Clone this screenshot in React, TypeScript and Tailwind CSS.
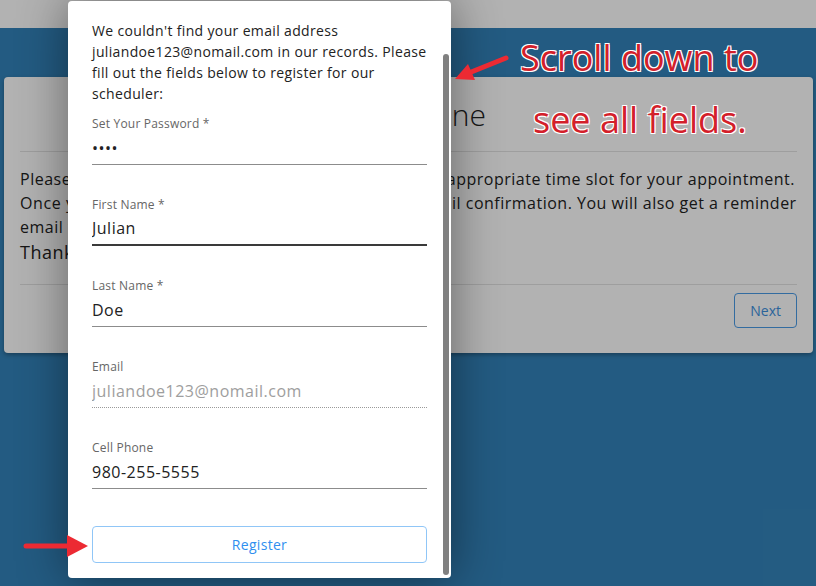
import React from "react"

const font = { fontFamily: '"Open Sans", "Noto Sans", sans-serif' }

function Field({
  label,
  value,
  type = "text",
  focused = false,
  disabled = false,
  last = false,
}: {
  label: string
  value: string
  type?: string
  focused?: boolean
  disabled?: boolean
  last?: boolean
}) {
  return (
    <div className={last ? "mb-[37px]" : "mb-[31px]"}>
      <label className="block h-[18px] text-[12px] leading-[18px] tracking-[0.2px] text-[#666]">{label}</label>
      <input
        type={type}
        value={value}
        readOnly
        disabled={disabled}
        className={
          "block h-[32px] w-full bg-transparent pb-[2px] text-[16px] tracking-[0.5px] outline-none " +
          (focused
            ? "border-b-2 border-[#3a3a3a] text-[#222]"
            : disabled
              ? "border-b border-dotted border-[#9a9a9a] text-[#9e9e9e]"
              : "border-b border-[#8c8c8c] text-[#222]")
        }
      />
    </div>
  )
}

export default function App() {
  return (
    <div className="relative h-[586px] w-full overflow-hidden bg-[#3383ba]" style={font}>
      {/* page behind */}
      <div className="h-[28px] bg-white" />
      <div className="ml-1 mr-[3px] mt-[49px] rounded bg-white shadow-[0_2px_4px_rgba(0,0,0,0.3)]">
        <div className="pr-[327px] pt-[21px] pb-[19px] text-right text-[30px] font-light leading-[34px] text-[#222]">
          Schedule Online
        </div>
        <div className="mx-4 border-t border-[#e2e2e2]" />
        <div className="px-4 pt-[15px] pb-[18px] text-[16px] leading-[24px] tracking-[0.5px] text-[#222]">
          <p className="whitespace-nowrap">
            Please select a date on the calendar, then choose the appropriate time slot for your appointment.
            <br />
            <span className="tracking-[0.6px]">Once you book your time slot, you will receive an</span> email
            confirmation. You will also get a reminder
            <br />
            email the day before your appointment.
          </p>
          <p className="text-[18px] leading-[27px]">Thank you!</p>
        </div>
        <div className="mx-4 border-t border-[#e2e2e2]" />
        <div className="flex justify-end pl-4 pr-4 pt-[8px] pb-[25px]">
          <button className="h-[35px] rounded border border-[#4a9be6] px-[15px] text-[14px] font-medium text-[#3d8fdd]">
            Next
          </button>
        </div>
      </div>

      {/* backdrop */}
      <div className="absolute inset-0 bg-black/30" />

      {/* dialog */}
      <div className="absolute left-[68px] top-[1px] h-[577px] w-[383px] overflow-hidden rounded bg-white shadow-[0_0_50px_rgba(0,0,0,0.45)]">
        <div className="px-6 pt-[19px]">
          <p className="whitespace-nowrap text-[14px] leading-[21px] tracking-[0.35px] text-[#222]">
            We couldn't find your email address
            <br />
            juliandoe123@nomail.com in our records. Please
            <br />
            fill out the fields below to register for our
            <br />
            scheduler:
          </p>
          <div className="mt-[11px]">
            <Field label="Set Your Password *" value="abcd" type="password" />
            <Field label="First Name *" value="Julian" focused />
            <Field label="Last Name *" value="Doe" />
            <Field label="Email" value="juliandoe123@nomail.com" disabled />
            <Field label="Cell Phone" value="980-255-5555" last />
          </div>
          <button className="h-[37px] w-[335px] rounded border border-[#90c6f7] text-[14px] font-medium tracking-[0.3px] text-[#2f8fef]">
            Register
          </button>
        </div>
        <div className="absolute right-[2px] top-[53px] h-[521px] w-[6px] rounded-full bg-[#808080]" />
      </div>

      {/* annotations */}
      <div className="absolute left-[520px] top-[30px] text-[36px] leading-[56px] text-[#d3202a] [text-shadow:1px_1px_0_#fff,-1px_-1px_0_#fff,1px_-1px_0_#fff,-1px_1px_0_#fff]">
        Scroll down to
      </div>
      <div className="absolute left-[533px] top-[92px] text-[36px] leading-[56px] text-[#d3202a] [text-shadow:1px_1px_0_#fff,-1px_-1px_0_#fff,1px_-1px_0_#fff,-1px_1px_0_#fff]">
        see all fields.
      </div>
      <svg className="pointer-events-none absolute inset-0" width="816" height="586">
        <line x1="506" y1="58" x2="470" y2="72.5" stroke="#ec2a33" strokeWidth="5" strokeLinecap="round" />
        <polygon points="455,79 475,80 468,64" fill="#ec2a33" />
        <line x1="26" y1="546" x2="72" y2="546" stroke="#ec2a33" strokeWidth="5" strokeLinecap="round" />
        <polygon points="88,546 67,535 67,557" fill="#ec2a33" />
      </svg>
    </div>
  )
}
